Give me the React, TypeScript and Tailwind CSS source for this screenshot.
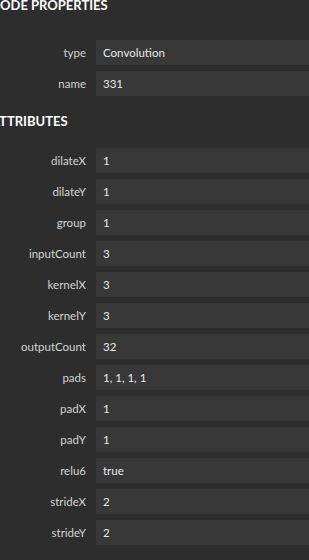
import React from "react";

const font = { fontFamily: 'Lato, "Noto Sans", sans-serif' };

function Row({ label, value }: { label: string; value: string }) {
  return (
    <div className="flex items-center h-[25px]">
      <div className="w-[86px] shrink-0 text-right text-[11.5px] text-[#d4d4d4]">{label}</div>
      <div className="ml-[10px] flex-1 h-[25px] bg-[#383838] flex items-center pl-[7px] text-[11.5px] text-[#e8e8e8]">
        {value}
      </div>
    </div>
  );
}

export default function App() {
  const attrs: [string, string][] = [
    ["dilateX", "1"],
    ["dilateY", "1"],
    ["group", "1"],
    ["inputCount", "3"],
    ["kernelX", "3"],
    ["kernelY", "3"],
    ["outputCount", "32"],
    ["pads", "1, 1, 1, 1"],
    ["padX", "1"],
    ["padY", "1"],
    ["relu6", "true"],
    ["strideX", "2"],
    ["strideY", "2"],
  ];
  return (
    <div className="w-[309px] h-[560px] overflow-hidden bg-[#2d2d2d]" style={font}>
      <div className="h-[18px] mt-[-4px] ml-[-10px] text-[13px] font-bold text-white leading-[18px]">
        NODE PROPERTIES
      </div>
      <div className="mt-[26px] flex flex-col gap-[6px]">
        <Row label="type" value="Convolution" />
        <Row label="name" value="331" />
      </div>
      <div className="mt-[16px] ml-[-9px] h-[18px] text-[13px] font-bold text-white leading-[18px]">
        ATTRIBUTES
      </div>
      <div className="mt-[18px] flex flex-col gap-[6px]">
        {attrs.map(([l, v]) => (
          <Row key={l} label={l} value={v} />
        ))}
      </div>
    </div>
  );
}
